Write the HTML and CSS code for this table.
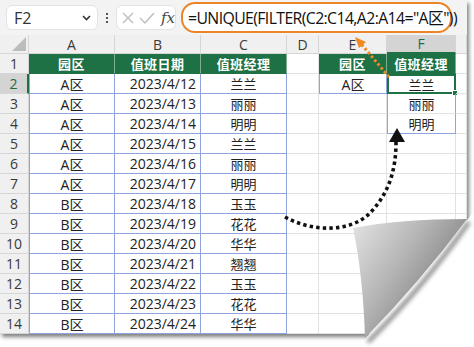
FILE: index.html
```html
<!DOCTYPE html>
<html lang="zh">
<head>
<meta charset="utf-8">
<title>UNIQUE FILTER</title>
<link rel="stylesheet" href="styles.css">
</head>
<body>
<div class="page">
  <div class="sheet">
    <div class="toolbar">
      <div class="namebox"><span>F2</span>
        <svg class="chev" width="9" height="6" viewBox="0 0 9 6"><polyline points="1,1 4.5,4.5 8,1" fill="none" stroke="#333" stroke-width="1.6"/></svg>
      </div>
      <div class="sep"><i></i><i></i><i></i></div>
      <div class="fxbox">
        <svg width="14" height="14" viewBox="0 0 14 14"><path d="M2 2 L12 12 M12 2 L2 12" stroke="#bdbdbd" stroke-width="1.4" fill="none"/></svg>
        <svg width="16" height="14" viewBox="0 0 16 14"><path d="M1 7 L6 12 L15 2" stroke="#bdbdbd" stroke-width="1.4" fill="none"/></svg>
        <span class="fx">fx</span>
      </div>
      <div class="formula">=UNIQUE(FILTER(C2:C14,A2:A14="A区"))</div>
    </div>
    <div class="grid">
      <div class="cell corner"><span class="tri"></span></div>
      <div class="cell ch">A</div><div class="cell ch">B</div><div class="cell ch">C</div><div class="cell ch">D</div><div class="cell ch">E</div><div class="cell ch selh">F</div><div class="cell ch"></div>

      <div class="cell rh">1</div>
      <div class="cell hd">园区</div><div class="cell hd">值班日期</div><div class="cell hd">值班经理</div><div class="cell"></div><div class="cell hd">园区</div><div class="cell hd">值班经理</div><div class="cell"></div>

      <div class="cell rh selr">2</div>
      <div class="cell t ta">A区</div><div class="cell t tb">2023/4/12</div><div class="cell t tc">兰兰</div><div class="cell"></div><div class="cell t ta e2">A区</div><div class="cell tc active">兰兰<span class="handle"></span></div><div class="cell"></div>

      <div class="cell rh">3</div>
      <div class="cell t ta">A区</div><div class="cell t tb">2023/4/13</div><div class="cell t tc">丽丽</div><div class="cell"></div><div class="cell"></div><div class="cell tc sp">丽丽</div><div class="cell"></div>

      <div class="cell rh">4</div>
      <div class="cell t ta">A区</div><div class="cell t tb">2023/4/14</div><div class="cell t tc">明明</div><div class="cell"></div><div class="cell"></div><div class="cell tc sp spb">明明</div><div class="cell"></div>

      <div class="cell rh">5</div>
      <div class="cell t ta">A区</div><div class="cell t tb">2023/4/15</div><div class="cell t tc">兰兰</div><div class="cell"></div><div class="cell"></div><div class="cell"></div><div class="cell"></div>

      <div class="cell rh">6</div>
      <div class="cell t ta">A区</div><div class="cell t tb">2023/4/16</div><div class="cell t tc">丽丽</div><div class="cell"></div><div class="cell"></div><div class="cell"></div><div class="cell"></div>

      <div class="cell rh">7</div>
      <div class="cell t ta">A区</div><div class="cell t tb">2023/4/17</div><div class="cell t tc">明明</div><div class="cell"></div><div class="cell"></div><div class="cell"></div><div class="cell"></div>

      <div class="cell rh">8</div>
      <div class="cell t ta">B区</div><div class="cell t tb">2023/4/18</div><div class="cell t tc">玉玉</div><div class="cell"></div><div class="cell"></div><div class="cell"></div><div class="cell"></div>

      <div class="cell rh">9</div>
      <div class="cell t ta">B区</div><div class="cell t tb">2023/4/19</div><div class="cell t tc">花花</div><div class="cell"></div><div class="cell"></div><div class="cell"></div><div class="cell"></div>

      <div class="cell rh">10</div>
      <div class="cell t ta">B区</div><div class="cell t tb">2023/4/20</div><div class="cell t tc">华华</div><div class="cell"></div><div class="cell"></div><div class="cell"></div><div class="cell"></div>

      <div class="cell rh">11</div>
      <div class="cell t ta">B区</div><div class="cell t tb">2023/4/21</div><div class="cell t tc">翘翘</div><div class="cell"></div><div class="cell"></div><div class="cell"></div><div class="cell"></div>

      <div class="cell rh">12</div>
      <div class="cell t ta">B区</div><div class="cell t tb">2023/4/22</div><div class="cell t tc">玉玉</div><div class="cell"></div><div class="cell"></div><div class="cell"></div><div class="cell"></div>

      <div class="cell rh">13</div>
      <div class="cell t ta">B区</div><div class="cell t tb">2023/4/23</div><div class="cell t tc">花花</div><div class="cell"></div><div class="cell"></div><div class="cell"></div><div class="cell"></div>

      <div class="cell rh">14</div>
      <div class="cell t ta">B区</div><div class="cell t tb">2023/4/24</div><div class="cell t tc">华华</div><div class="cell"></div><div class="cell"></div><div class="cell"></div><div class="cell"></div>
    </div>
  </div>

  <svg class="overlay" width="474" height="347" viewBox="0 0 474 347">
    <defs>
      <linearGradient id="fold" x1="0" y1="0" x2="1" y2="0.7">
        <stop offset="0" stop-color="#e4e4e4"/>
        <stop offset="0.45" stop-color="#b4b4b4"/>
        <stop offset="1" stop-color="#6c6c6c"/>
      </linearGradient>
      <filter id="blur" x="-20%" y="-20%" width="140%" height="140%"><feGaussianBlur stdDeviation="2"/></filter>
    </defs>
    <path d="M389 77 L362 45" stroke="#ef8a25" stroke-width="3" stroke-dasharray="2.6 2.4" fill="none"/>
    <polygon points="355,37 366,42 359,48" fill="#ef8a25"/>
    <path d="M285 217 C 312 232 350 233 370 213 C 388 194 396 172 396 142" stroke="#111" stroke-width="3.6" stroke-dasharray="3.4 3.2" fill="none"/>
    <polygon points="397,128 405,142 389,142" fill="#111"/>
    <polygon points="467,220 474,212 474,347 350,347 365,339" fill="#fff"/>
    <path d="M469 222 Q 425 285 368 342" stroke="#555" stroke-width="4" fill="none" opacity="0.7" filter="url(#blur)"/>
    <path d="M353 228 Q 400 219 467 219 Q 420 282 365 338 Q 363 275 353 228 Z" fill="url(#fold)"/>
  </svg>
</div>
</body>
</html>
```

FILE: styles.css
```css
* { box-sizing: border-box; }
body {
  margin: 0;
  background: #fff;
  font-family: "Open Sans", "Noto Sans CJK SC", sans-serif;
  color: #222;
}
.page {
  position: relative;
  width: 474px;
  height: 347px;
  overflow: hidden;
}
.sheet {
  width: 467px;
  background: #f3f3f3;
  box-shadow: 2px 3px 4px rgba(0, 0, 0, 0.5);
}
.toolbar {
  height: 35px;
  display: flex;
  align-items: center;
  padding-left: 6px;
}
.namebox {
  width: 92px;
  height: 25px;
  background: #fff;
  border: 1px solid #e3e3e3;
  border-radius: 6px;
  display: flex;
  align-items: center;
  justify-content: space-between;
  padding: 0 6px 0 7px;
  font-size: 16px;
  color: #333;
}
.chev { margin-top: 1px; }
.sep {
  width: 18px;
  display: flex;
  flex-direction: column;
  align-items: center;
  gap: 2px;
}
.sep i {
  width: 2px;
  height: 2px;
  background: #555;
  display: block;
}
.fxbox {
  width: 60px;
  height: 25px;
  background: #fff;
  border: 1px solid #e3e3e3;
  border-radius: 6px;
  display: flex;
  align-items: center;
  padding-left: 4px;
  gap: 4px;
}
.fx {
  font-family: "DejaVu Serif", "Liberation Serif", serif;
  font-style: italic;
  font-size: 15px;
  color: #444;
  margin-left: 2px;
}
.formula {
  margin-left: 5px;
  width: 271px;
  height: 31px;
  background: #fff;
  border: 2px solid #ec8528;
  border-radius: 14px;
  display: flex;
  align-items: center;
  padding-left: 5px;
  font-size: 15.8px;
  letter-spacing: -0.6px;
  color: #111;
  white-space: nowrap;
}
.grid {
  display: grid;
  grid-template-columns: 29px 86px 86px 86px 32px 68px 69px 11px;
  grid-template-rows: 19px repeat(14, 20px);
  background: #fff;
}
.cell {
  position: relative;
  border-right: 1px solid #e2e2e2;
  border-bottom: 1px solid #e2e2e2;
  display: flex;
  align-items: center;
  font-size: 14px;
  white-space: nowrap;
}
.corner {
  background: #f0f0f0;
  border-color: #d6d6d6;
}
.tri {
  position: absolute;
  right: 2px;
  bottom: 2px;
  width: 14px;
  height: 14px;
  background: #bcbcbc;
  clip-path: polygon(100% 0, 100% 100%, 0 100%);
}
.ch {
  background: #f0f0f0;
  border-color: #d6d6d6;
  justify-content: center;
  color: #3a3a3a;
  font-size: 14px;
}
.selh {
  background: #d4d4d4;
  color: #1d6b40;
  border-bottom: 2px solid #1e7145;
}
.rh {
  background: #f0f0f0;
  border-color: #d6d6d6;
  justify-content: center;
  color: #3a3a3a;
  font-size: 14px;
}
.selr {
  background: #d4d4d4;
  color: #1d6b40;
  border-right: 2px solid #1e7145;
}
.hd {
  background: #1e7145;
  color: #fff;
  font-weight: 700;
  font-size: 13px;
  justify-content: center;
  border-right-color: #7fae93;
  border-bottom-color: #1e7145;
  letter-spacing: 0.4px;
}
.t {
  border-right-color: #8ea4dc;
  border-bottom-color: #8ea4dc;
}
.ta { justify-content: center; border-left: 1px solid #8ea4dc; }
.tb { justify-content: flex-end; padding-right: 4px; }
.tc { justify-content: center; font-size: 13px; }
.e2 { border-left: 1px solid #8ea4dc; }
.active {
  border: 2px solid #1e7145;
}
.handle {
  position: absolute;
  right: -4px;
  bottom: -4px;
  width: 6px;
  height: 6px;
  background: #1e7145;
  border: 1px solid #fff;
}
.sp {
  border-left: 1px solid #8ea4dc;
  border-right-color: #8ea4dc;
}
.spb { border-bottom-color: #8ea4dc; }
.overlay {
  position: absolute;
  left: 0;
  top: 0;
}
```
